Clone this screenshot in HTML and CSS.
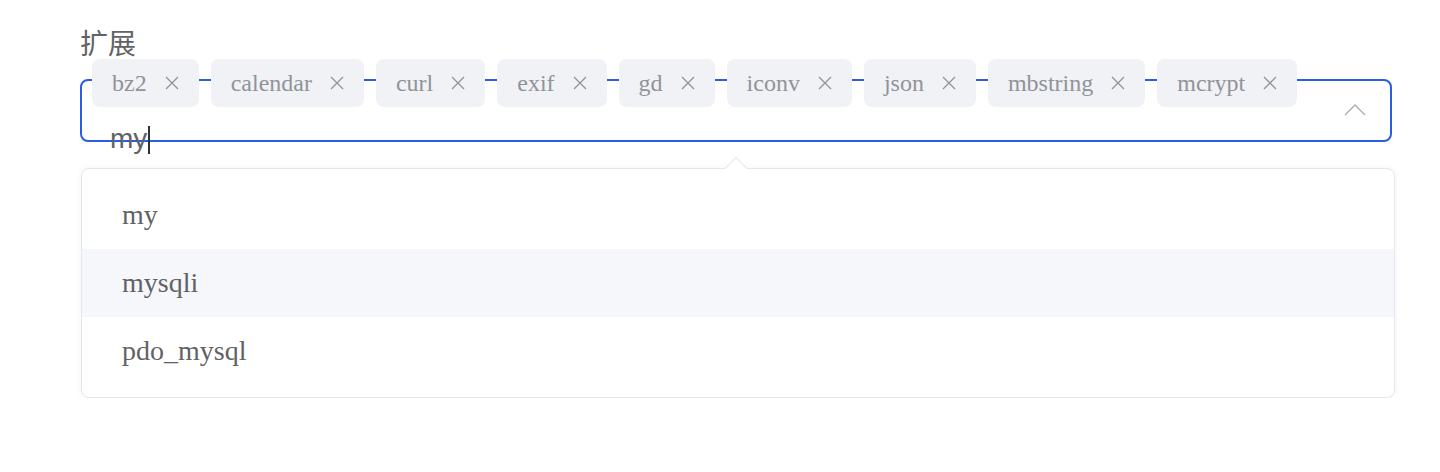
FILE: index.html
```html
<!DOCTYPE html>
<html lang="zh-CN">
<head>
    <meta charset="UTF-8">
    <meta name="viewport" content="width=device-width, initial-scale=1.0">
    <title>扩展</title>
    <link rel="stylesheet" href="styles.css">
</head>
<body>
    <div class="form-item">
        <label class="form-label">扩展</label>
        <div class="select is-focus">
            <div class="select-tags">
                <span class="tag">bz2<svg class="tag-close" viewBox="0 0 16 16"><path d="M2 2L14 14M14 2L2 14"/></svg></span>
                <span class="tag">calendar<svg class="tag-close" viewBox="0 0 16 16"><path d="M2 2L14 14M14 2L2 14"/></svg></span>
                <span class="tag">curl<svg class="tag-close" viewBox="0 0 16 16"><path d="M2 2L14 14M14 2L2 14"/></svg></span>
                <span class="tag">exif<svg class="tag-close" viewBox="0 0 16 16"><path d="M2 2L14 14M14 2L2 14"/></svg></span>
                <span class="tag">gd<svg class="tag-close" viewBox="0 0 16 16"><path d="M2 2L14 14M14 2L2 14"/></svg></span>
                <span class="tag">iconv<svg class="tag-close" viewBox="0 0 16 16"><path d="M2 2L14 14M14 2L2 14"/></svg></span>
                <span class="tag">json<svg class="tag-close" viewBox="0 0 16 16"><path d="M2 2L14 14M14 2L2 14"/></svg></span>
                <span class="tag">mbstring<svg class="tag-close" viewBox="0 0 16 16"><path d="M2 2L14 14M14 2L2 14"/></svg></span>
                <span class="tag">mcrypt<svg class="tag-close" viewBox="0 0 16 16"><path d="M2 2L14 14M14 2L2 14"/></svg></span>
            </div>
            <div class="select-query">my<span class="caret"></span></div>
            <svg class="select-arrow" viewBox="0 0 22 13"><path d="M1 12L11 2L21 12"/></svg>
        </div>
        <div class="dropdown">
            <span class="dropdown-arrow"></span>
            <ul class="dropdown-list">
                <li class="dropdown-item">my</li>
                <li class="dropdown-item hover">mysqli</li>
                <li class="dropdown-item">pdo_mysql</li>
            </ul>
        </div>
    </div>
</body>
</html>
```

FILE: styles.css
```css
body {
    margin: 0;
    background: #fff;
    font-family: "Liberation Serif", "Noto Sans CJK SC", serif;
    color: #606266;
}
.form-item {
    padding: 22px 0 0 80px;
    width: 1315px;
}
.form-label {
    display: block;
    height: 40px;
    line-height: 40px;
    font-size: 28px;
    font-family: "Noto Sans CJK SC", sans-serif;
    color: #606266;
}
.select {
    position: relative;
    margin-top: 17px;
    width: 1312px;
    height: 63px;
    box-sizing: border-box;
    border: 2px solid #2b5ce6;
    border-radius: 8px;
    background: #fff;
}
.select-tags {
    position: absolute;
    top: -22px;
    left: 10px;
    display: flex;
    gap: 12px;
}
.tag {
    display: flex;
    align-items: center;
    height: 48px;
    padding: 0 19px 0 20px;
    border-radius: 8px;
    background: #f0f2f5;
    color: #909399;
    font-size: 24px;
    white-space: nowrap;
}
.tag-close {
    width: 16px;
    height: 16px;
    margin-left: 17px;
    fill: none;
    stroke: #909399;
    stroke-width: 1.3;
}
.select-query {
    margin: 40px 0 0 28px;
    height: 36px;
    line-height: 36px;
    font-family: "Liberation Sans", sans-serif;
    font-size: 28px;
    color: #606266;
}
.caret {
    display: inline-block;
    width: 2px;
    height: 28px;
    margin-left: 1px;
    vertical-align: -6px;
    background: #303133;
}
.select-arrow {
    position: absolute;
    top: 22px;
    right: 24px;
    width: 22px;
    height: 13px;
    fill: none;
    stroke: #a8abb2;
    stroke-width: 1.3;
}
.dropdown {
    position: relative;
    margin: 26px 0 0 1px;
    width: 1314px;
    box-sizing: border-box;
    border: 1px solid #e4e7ed;
    border-radius: 8px;
    background: #fff;
    box-shadow: 0 0 6px rgba(0, 0, 0, 0.05);
}
.dropdown-arrow {
    position: absolute;
    top: -9px;
    left: 646px;
    width: 16px;
    height: 16px;
    box-sizing: border-box;
    border-top: 1px solid #e4e7ed;
    border-left: 1px solid #e4e7ed;
    background: #fff;
    transform: rotate(45deg);
}
.dropdown-list {
    list-style: none;
    margin: 0;
    padding: 12px 0;
}
.dropdown-item {
    height: 68px;
    line-height: 68px;
    padding-left: 40px;
    font-size: 28px;
    color: #606266;
}
.dropdown-item.hover {
    background: #f5f7fa;
}
```
